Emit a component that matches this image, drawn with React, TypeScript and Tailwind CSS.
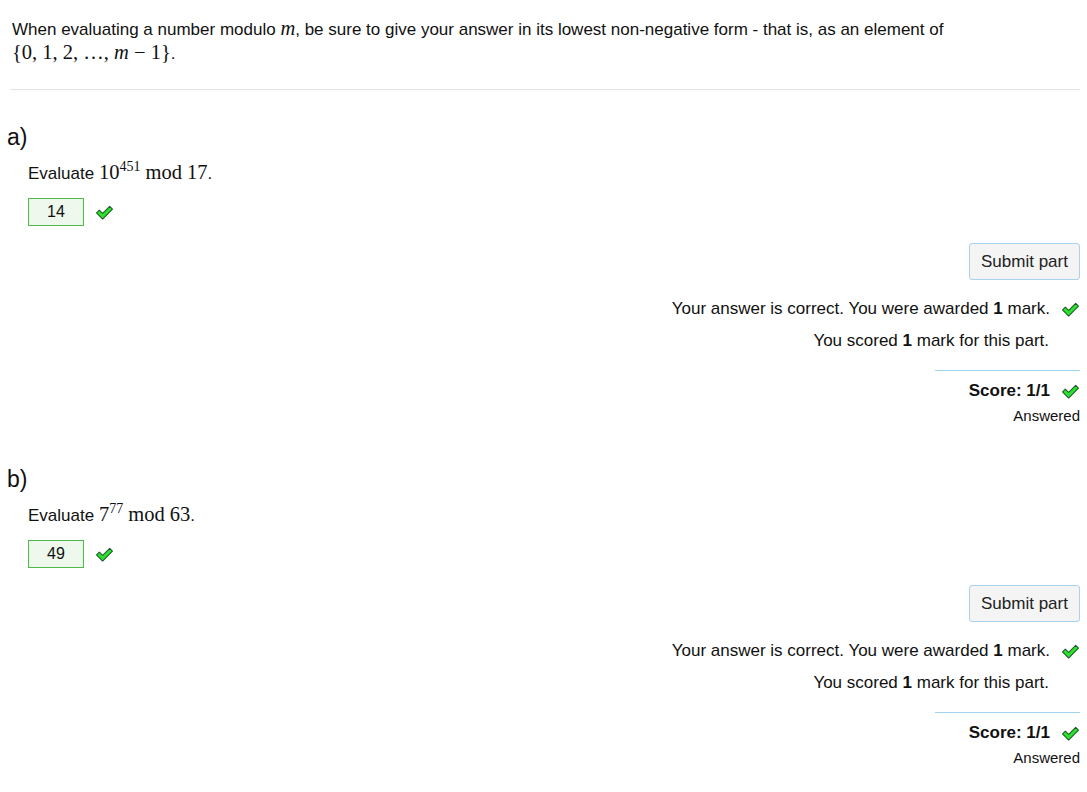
import React from 'react';

const Tick: React.FC<{ className?: string }> = ({ className }) => (
  <svg viewBox="0 0 20 16" className={className} aria-hidden="true">
    <path
      d="M1.5 8.5 L4.5 5.5 L8 9 L15.5 1.5 L18.5 4.5 L8 15 Z"
      fill="#2ee02e"
      stroke="#1d5a2a"
      strokeWidth="1.1"
      strokeLinejoin="round"
    />
  </svg>
);

const M: React.FC<{ children: React.ReactNode; className?: string }> = ({ children, className = '' }) => (
  <span className={`font-['Liberation_Serif',serif] text-[20.5px] leading-none ${className}`}>{children}</span>
);

type PartProps = {
  label: string;
  prompt: React.ReactNode;
  answer: string;
};

const Part: React.FC<PartProps> = ({ label, prompt, answer }) => (
  <section className="pr-[7px] pb-[6px]">
    <h3 className="pl-[7px] text-[23px] leading-[28px] mt-[33px]">{label}</h3>
    <p className="pl-[28px] mt-[11px] text-[17px] leading-[24px]">{prompt}</p>
    <div className="pl-[28px] mt-[12px] flex items-center gap-[11px]">
      <div className="w-[56px] h-[28px] border border-[#4cbb4c] bg-[#eef8ec] flex items-center justify-center text-[16px]">
        {answer}
      </div>
      <Tick className="w-[19px] h-[15px]" />
    </div>
    <div className="flex justify-end mt-[17px]">
      <button className="w-[111px] h-[37px] bg-[#f4f4f4] border border-[#a9d2ee] rounded-[3px] text-[17px] text-[#222]">
        Submit part
      </button>
    </div>
    <div className="flex justify-end items-center gap-[11px] mt-[17px] text-[17px] leading-[24px]">
      <span>
        Your answer is correct. You were awarded <b>1</b> mark.
      </span>
      <Tick className="w-[19px] h-[15px]" />
    </div>
    <div className="flex justify-end mt-[8px] pr-[31px] text-[17px] leading-[24px]">
      <span>
        You scored <b>1</b> mark for this part.
      </span>
    </div>
    <div className="flex justify-end mt-[17px]">
      <div className="w-[145px] border-t border-[#9fd3ef]" />
    </div>
    <div className="flex justify-end items-center gap-[11px] mt-[8px] text-[17px] leading-[24px] font-bold">
      <span>Score: 1/1</span>
      <Tick className="w-[19px] h-[15px]" />
    </div>
    <div className="flex justify-end text-[15px] leading-[20px] mt-[3px]">Answered</div>
  </section>
);

export default function App() {
  return (
    <div className="min-h-screen bg-white text-[#111] font-['Liberation_Sans',Arial,sans-serif] pt-[18px]">
      <div className="pl-[12px] text-[17px] leading-[24px]">
        <p>
          When evaluating a number modulo <M className="italic">m</M>, be sure to give your answer in its lowest
          non-negative form - that is, as an element of
          <br />
          <M>
            {'{'}0, 1, 2, …, <i>m</i> − 1{'}'}
          </M>
          .
        </p>
      </div>
      <hr className="mt-[23px] ml-[10px] mr-[7px] border-t border-[#e4e4e4]" />
      <Part
        label="a)"
        answer="14"
        prompt={
          <>
            Evaluate{' '}
            <M>
              10<sup className="text-[14px] -top-[8px]">451</sup> mod 17
            </M>
            .
          </>
        }
      />
      <Part
        label="b)"
        answer="49"
        prompt={
          <>
            Evaluate{' '}
            <M>
              7<sup className="text-[14px] -top-[8px]">77</sup> mod 63
            </M>
            .
          </>
        }
      />
    </div>
  );
}
